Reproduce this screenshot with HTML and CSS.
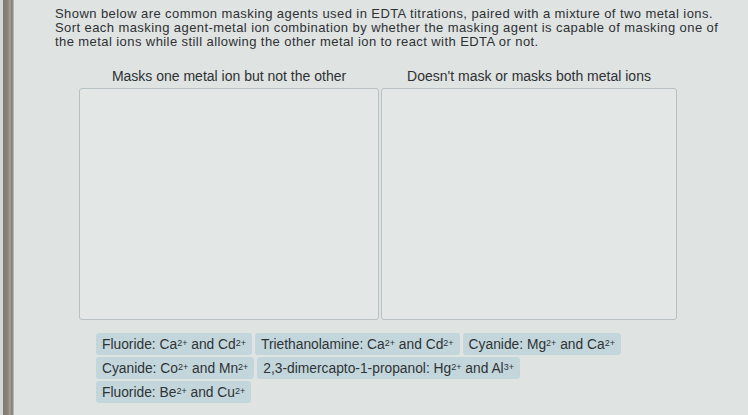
FILE: index.html
```html
<!DOCTYPE html>
<html lang="en">
<head>
    <meta charset="UTF-8">
    <meta name="viewport" content="width=device-width, initial-scale=1.0">
    <title>Masking agents</title>
    <link rel="stylesheet" href="styles.css">
</head>
<body>
    <div class="edge"></div>
    <div class="page">
        <p class="prompt">Shown below are common masking agents used in EDTA titrations, paired with a mixture of two metal ions.<br>Sort each masking agent-metal ion combination by whether the masking agent is capable of masking one of<br>the metal ions while still allowing the other metal ion to react with EDTA or not.</p>

        <div class="bins">
            <div class="bin">
                <h2>Masks one metal ion but not the other</h2>
                <div class="drop"></div>
            </div>
            <div class="bin">
                <h2>Doesn't mask or masks both metal ions</h2>
                <div class="drop"></div>
            </div>
        </div>

        <div class="pool">
            <div class="row">
                <span class="chip">Fluoride: Ca<sup>2+</sup> and Cd<sup>2+</sup></span>
                <span class="chip">Triethanolamine: Ca<sup>2+</sup> and Cd<sup>2+</sup></span>
                <span class="chip">Cyanide: Mg<sup>2+</sup> and Ca<sup>2+</sup></span>
            </div>
            <div class="row">
                <span class="chip">Cyanide: Co<sup>2+</sup> and Mn<sup>2+</sup></span>
                <span class="chip">2,3-dimercapto-1-propanol: Hg<sup>2+</sup> and Al<sup>3+</sup></span>
            </div>
            <div class="row">
                <span class="chip">Fluoride: Be<sup>2+</sup> and Cu<sup>2+</sup></span>
            </div>
        </div>
    </div>
</body>
</html>
```

FILE: styles.css
```css
body {
    margin: 0;
    height: 415px;
    display: flex;
    background-color: #dfe3e2;
    font-family: 'Liberation Sans', Arial, sans-serif;
    color: #2e3133;
    overflow: hidden;
}
.edge {
    width: 14px;
    flex: none;
    background: linear-gradient(to right, #d4d6d4 0, #d4d6d4 3px, #7e7a72 3px, #8a857c 8px, #a8a49c 10px, #7a766e 12px, #c9ccca 14px);
}
.page {
    flex: 1;
    padding: 7px 0 0 41px;
}
.prompt {
    margin: 0;
    font-size: 13px;
    letter-spacing: 0.42px;
    line-height: 14px;
    white-space: nowrap;
}
.bins {
    display: flex;
    gap: 2px;
    margin: 19px 0 0 24px;
}
.bin {
    display: flex;
    flex-direction: column;
    align-items: center;
}
.bin:first-child {
    width: 300px;
}
.bin:last-child {
    width: 296px;
}
.bin h2 {
    margin: 0 0 4px;
    font-size: 14px;
    font-weight: normal;
    line-height: 16px;
}
.drop {
    width: 100%;
    box-sizing: border-box;
    height: 232px;
    border: 1px solid #b7c0c2;
    border-radius: 3px;
    background-color: #e3e7e6;
}
.pool {
    display: flex;
    flex-direction: column;
    gap: 2px;
    margin: 13px 0 0 41px;
}
.row {
    display: flex;
    gap: 3px;
}
.chip {
    height: 22px;
    padding: 0 6px;
    display: flex;
    align-items: center;
    border-radius: 3px;
    background-color: #c2d6dc;
    font-size: 13.8px;
    color: #2f3335;
    white-space: pre;
}
.chip sup {
    font-size: 9px;
    position: relative;
    top: -1px;
}
```
